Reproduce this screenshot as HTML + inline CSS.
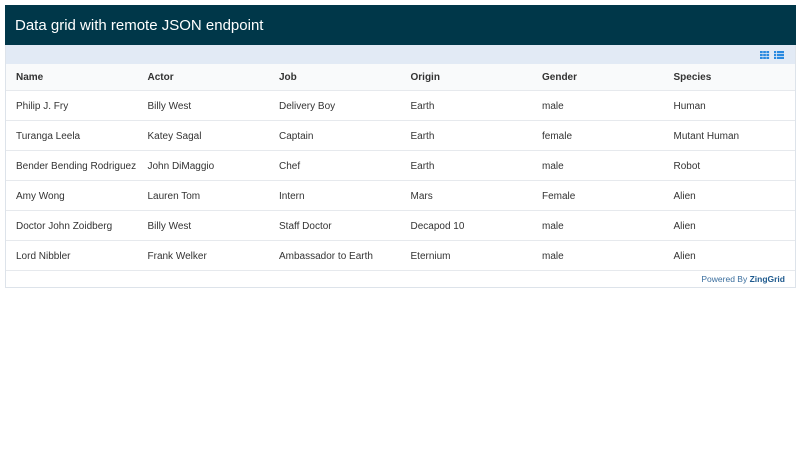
<!DOCTYPE html>
<html><head><style>
body{margin:0;background:#fff;font-family:"Liberation Sans",sans-serif;}
.g{position:absolute;left:5px;top:5px;width:789px;border:1px solid #dde3ea;border-top:none;}
.h{background:#003749;color:#fff;height:40px;line-height:42px;font-size:15px;padding-left:10px;margin:0 -1px;}
.tb{background:#e2eaf5;height:19px;position:relative;}
.r{display:flex;height:29px;line-height:31px;border-bottom:1px solid #e6e9ed;font-size:10px;color:#333;white-space:nowrap;}
.r div{width:131.5px;padding-left:10px;box-sizing:border-box;overflow:visible;}
.hd{background:#f9fafb;height:26px;line-height:27px;font-weight:bold;}
.f{height:16px;line-height:17px;font-size:8.5px;color:#3a6e9e;text-align:right;padding-right:10px;}
</style></head><body>
<div class="g">
<div class="h">Data grid with remote JSON endpoint</div>
<div class="tb">
<svg style="position:absolute;left:754px;top:6px" width="30" height="8">
<g fill="#2a8ae0"><rect x="0" y="0" width="2.7" height="2.2" /><rect x="3.2" y="0" width="2.7" height="2.2"/><rect x="6.4" y="0" width="2.7" height="2.2"/>
<rect x="0" y="3" width="2.7" height="2.2"/><rect x="3.2" y="3" width="2.7" height="2.2"/><rect x="6.4" y="3" width="2.7" height="2.2"/>
<rect x="0" y="6" width="2.7" height="2.2"/><rect x="3.2" y="6" width="2.7" height="2.2"/><rect x="6.4" y="6" width="2.7" height="2.2"/>
<rect x="14" y="0" width="2.2" height="2.2"/><rect x="17" y="0" width="7" height="2.2"/>
<rect x="14" y="3" width="2.2" height="2.2"/><rect x="17" y="3" width="7" height="2.2"/>
<rect x="14" y="6" width="2.2" height="2.2"/><rect x="17" y="6" width="7" height="2.2"/></g></svg>
</div>
<div class="r hd"><div>Name</div><div>Actor</div><div>Job</div><div>Origin</div><div>Gender</div><div>Species</div></div>
<div class="r"><div>Philip J. Fry</div><div>Billy West</div><div>Delivery Boy</div><div>Earth</div><div>male</div><div>Human</div></div>
<div class="r"><div>Turanga Leela</div><div>Katey Sagal</div><div>Captain</div><div>Earth</div><div>female</div><div>Mutant Human</div></div>
<div class="r"><div>Bender Bending Rodriguez</div><div>John DiMaggio</div><div>Chef</div><div>Earth</div><div>male</div><div>Robot</div></div>
<div class="r"><div>Amy Wong</div><div>Lauren Tom</div><div>Intern</div><div>Mars</div><div>Female</div><div>Alien</div></div>
<div class="r"><div>Doctor John Zoidberg</div><div>Billy West</div><div>Staff Doctor</div><div>Decapod 10</div><div>male</div><div>Alien</div></div>
<div class="r"><div>Lord Nibbler</div><div>Frank Welker</div><div>Ambassador to Earth</div><div>Eternium</div><div>male</div><div>Alien</div></div>
<div class="f">Powered By <b style="color:#1e5a8e">ZingGrid</b></div>
</div>
</body></html>
